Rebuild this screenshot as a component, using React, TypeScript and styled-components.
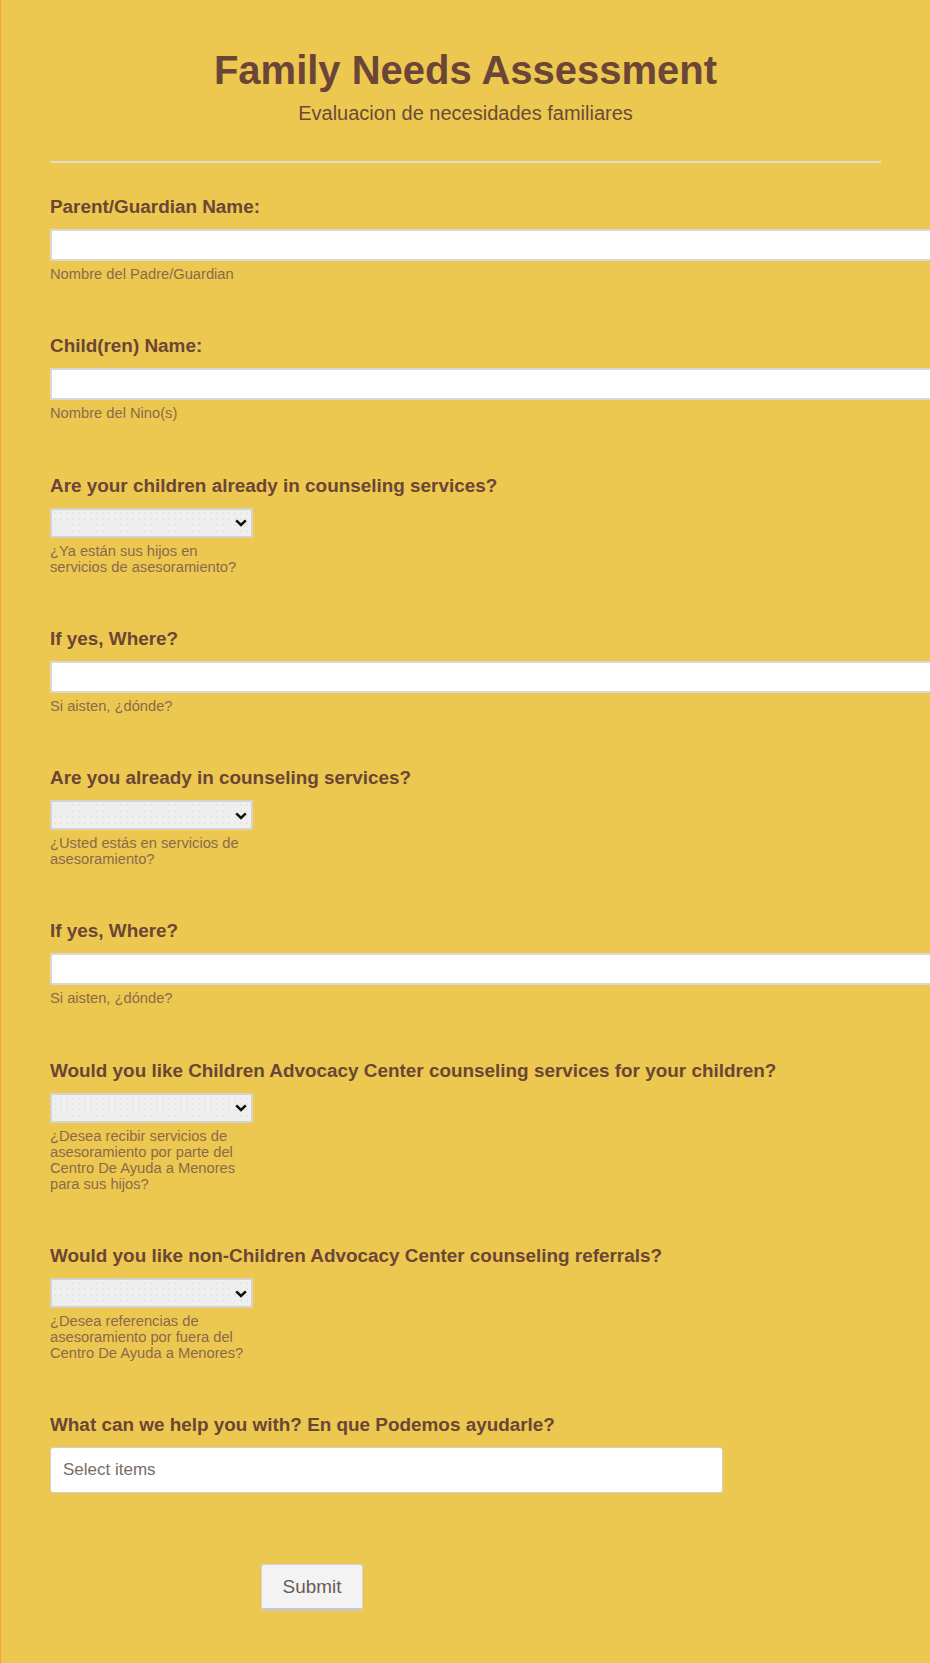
import React from 'react';
import styled, { createGlobalStyle } from 'styled-components';

const GlobalStyle = createGlobalStyle`
  html, body {
    margin: 0;
    padding: 0;
    background: #ecc850;
    overflow-x: hidden;
  }
  * {
    box-sizing: border-box;
  }
`;

type Field =
  | { kind: 'text'; label: string; hint: string }
  | { kind: 'select'; label: string; hint: string };

const fields: Field[] = [
  { kind: 'text', label: 'Parent/Guardian Name:', hint: 'Nombre del Padre/Guardian' },
  { kind: 'text', label: 'Child(ren) Name:', hint: 'Nombre del Nino(s)' },
  {
    kind: 'select',
    label: 'Are your children already in counseling services?',
    hint: '¿Ya están sus hijos en servicios de asesoramiento?',
  },
  { kind: 'text', label: 'If yes, Where?', hint: 'Si aisten, ¿dónde?' },
  {
    kind: 'select',
    label: 'Are you already in counseling services?',
    hint: '¿Usted estás en servicios de asesoramiento?',
  },
  { kind: 'text', label: 'If yes, Where?', hint: 'Si aisten, ¿dónde?' },
  {
    kind: 'select',
    label: 'Would you like Children Advocacy Center counseling services for your children?',
    hint: '¿Desea recibir servicios de asesoramiento por parte del Centro De Ayuda a Menores para sus hijos?',
  },
  {
    kind: 'select',
    label: 'Would you like non-Children Advocacy Center counseling referrals?',
    hint: '¿Desea referencias de asesoramiento por fuera del Centro De Ayuda a Menores?',
  },
];

export default function App() {
  return (
    <>
      <GlobalStyle />
      <S.Page>
        <S.Header>
          <S.Title>Family Needs Assessment</S.Title>
          <S.Subtitle>Evaluacion de necesidades familiares</S.Subtitle>
        </S.Header>
        <S.Divider />

        {fields.map((f, i) => (
          <S.Group key={i}>
            <S.Label>{f.label}</S.Label>
            {f.kind === 'text' ? (
              <>
                <S.TextInput type="text" />
                <S.Hint>{f.hint}</S.Hint>
              </>
            ) : (
              <S.SelectCol>
                <S.SelectWrap>
                  <S.Select defaultValue="">
                    <option value=""></option>
                    <option value="yes">Yes / Si</option>
                    <option value="no">No</option>
                  </S.Select>
                  <S.Chevron viewBox="0 0 12 8" aria-hidden>
                    <path d="M1.2 1.4 L6 6 L10.8 1.4" fill="none" stroke="#111" strokeWidth="2.6" />
                  </S.Chevron>
                </S.SelectWrap>
                <S.Hint>{f.hint}</S.Hint>
              </S.SelectCol>
            )}
          </S.Group>
        ))}

        <S.Group $last>
          <S.Label>What can we help you with? En que Podemos ayudarle?</S.Label>
          <S.MultiSelect>Select items</S.MultiSelect>
        </S.Group>

        <S.ButtonRow>
          <S.Submit type="button">Submit</S.Submit>
        </S.ButtonRow>
      </S.Page>
    </>
  );
}

const S = {
  Page: styled.div`
    min-height: 100vh;
    width: 100%;
    overflow: hidden;
    border-left: 1px solid #f1a24e;
    padding: 47px 49px 50px 49px;
    font-family: 'Liberation Sans', Arial, sans-serif;
  `,
  Header: styled.header`
    text-align: center;
  `,
  Title: styled.h1`
    margin: 0;
    font-size: 40px;
    line-height: 46px;
    font-weight: 700;
    color: #6b4535;
  `,
  Subtitle: styled.div`
    margin-top: 9px;
    font-size: 20px;
    line-height: 23px;
    color: #6b4a3a;
  `,
  Divider: styled.div`
    margin: 36px 0 33px;
    height: 2px;
    background: #e2ddd0;
  `,
  Group: styled.div<{ $last?: boolean }>`
    margin-bottom: ${(p) => (p.$last ? '71px' : '53.3px')};
  `,
  Label: styled.div`
    font-size: 18.9px;
    line-height: 22px;
    font-weight: 700;
    color: #6b4535;
    margin-bottom: 11px;
  `,
  TextInput: styled.input`
    display: block;
    width: 920px;
    height: 32px;
    margin: 0;
    padding: 0 8px;
    background: #fff;
    border: 2px solid #dad7d0;
    border-radius: 0;
    font: inherit;
    outline: none;
  `,
  SelectCol: styled.div`
    width: 203px;
  `,
  SelectWrap: styled.div`
    position: relative;
    width: 203px;
    height: 30px;
  `,
  Select: styled.select`
    appearance: none;
    -webkit-appearance: none;
    display: block;
    width: 100%;
    height: 100%;
    margin: 0;
    padding: 0 24px 0 6px;
    border: 2px solid #d6d3cc;
    border-radius: 0;
    background-color: #efefef;
    background-image: radial-gradient(#dcdcdc 0.6px, transparent 0.8px);
    background-size: 6px 6px;
    font: inherit;
    font-size: 15px;
    color: #333;
    outline: none;
  `,
  Chevron: styled.svg`
    position: absolute;
    right: 6px;
    top: 11.5px;
    width: 12px;
    height: 8px;
    pointer-events: none;
  `,
  Hint: styled.div`
    margin-top: 5px;
    font-size: 14.7px;
    line-height: 16px;
    color: #8b6a4b;
  `,
  MultiSelect: styled.div`
    margin-top: 1px;
    width: 673px;
    height: 46px;
    display: flex;
    align-items: center;
    padding: 0 12px;
    background: #fff;
    border: 1px solid #d2cfc8;
    border-radius: 3px;
    font-size: 17px;
    color: #7a6c64;
  `,
  ButtonRow: styled.div`
    display: flex;
    padding-left: 211px;
  `,
  Submit: styled.button`
    width: 102px;
    height: 47px;
    padding: 0;
    background: #f3f3f3;
    border: 1px solid #d4d4d4;
    border-bottom: 3px solid #c9c9c9;
    border-radius: 3px;
    font-family: 'Liberation Sans', Arial, sans-serif;
    font-size: 18.9px;
    color: #6b5a52;
    cursor: pointer;
  `,
};
